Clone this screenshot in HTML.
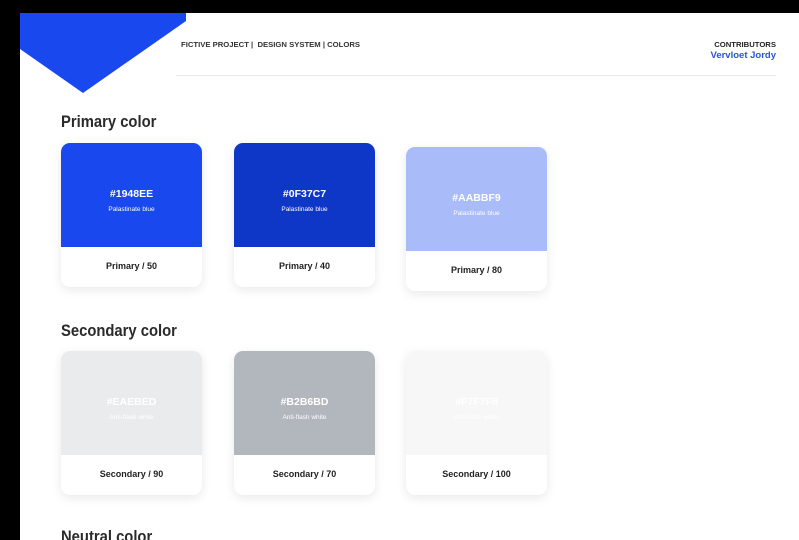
<!DOCTYPE html>
<html><head><style>
*{margin:0;padding:0;box-sizing:border-box}
html,body{width:799px;height:540px;overflow:hidden}
body{background:#000;position:relative;font-family:"Liberation Sans",sans-serif}
.page{position:absolute;left:20px;top:13px;width:779px;height:527px;background:#fff;overflow:hidden}
.nav{position:absolute;left:181px;top:40px;font-size:7.7px;font-weight:bold;color:#333}
.contrib{position:absolute;right:23px;top:40px;text-align:right;font-size:7.7px;font-weight:bold;color:#222}
.contrib b{display:block;color:#2a54d6;font-size:9.5px;margin-top:1px}
.line{position:absolute;left:176px;top:75px;width:600px;height:1px;background:#e9e9ec}
h2{position:absolute;left:61px;font-size:17px;font-weight:bold;color:#2a2a2a;transform:scaleX(0.87);transform-origin:left;white-space:nowrap}
.card{position:absolute;width:141px;height:144px;border-radius:9px;background:#fff;box-shadow:0 3px 10px rgba(0,0,0,.09);overflow:hidden}
.sw{height:104px;color:#fff;text-align:center;padding-top:45px}
.sw .h{font-size:10.5px;font-weight:bold}
.sw .n{font-size:6.5px;margin-top:6px}
.lb{text-align:center;font-size:9px;font-weight:bold;color:#222;padding-top:14px}
</style></head><body>
<div class="page">
<h2 style="top:514px;left:41px">Neutral color</h2>
</div>
<svg style="position:absolute;left:0;top:0" width="799" height="100"><polygon points="20,13 186,13 186,21 83,93 20,49" fill="#1948ee"/></svg>
<div class="nav">FICTIVE PROJECT |&nbsp; DESIGN SYSTEM | COLORS</div>
<div class="contrib">CONTRIBUTORS<b>Vervloet Jordy</b></div>
<div class="line"></div>
<h2 style="top:112px">Primary color</h2>
<div class="card" style="left:61px;top:143px"><div class="sw" style="background:#1948ee"><div class="h">#1948EE</div><div class="n">Palastinate blue</div></div><div class="lb">Primary / 50</div></div>
<div class="card" style="left:234px;top:143px"><div class="sw" style="background:#0f37c7"><div class="h">#0F37C7</div><div class="n">Palastinate blue</div></div><div class="lb">Primary / 40</div></div>
<div class="card" style="left:406px;top:147px"><div class="sw" style="background:#aabbf9"><div class="h">#AABBF9</div><div class="n">Palastinate blue</div></div><div class="lb">Primary / 80</div></div>
<h2 style="top:321px">Secondary color</h2>
<div class="card" style="left:61px;top:351px"><div class="sw" style="background:#eaebed"><div class="h">#EAEBED</div><div class="n">Anti-flash white</div></div><div class="lb">Secondary / 90</div></div>
<div class="card" style="left:234px;top:351px"><div class="sw" style="background:#b2b6bd"><div class="h">#B2B6BD</div><div class="n">Anti-flash white</div></div><div class="lb">Secondary / 70</div></div>
<div class="card" style="left:406px;top:351px"><div class="sw" style="background:#f7f7f8"><div class="h">#F7F7F8</div><div class="n">Anti-flash white</div></div><div class="lb">Secondary / 100</div></div>
</body></html>
